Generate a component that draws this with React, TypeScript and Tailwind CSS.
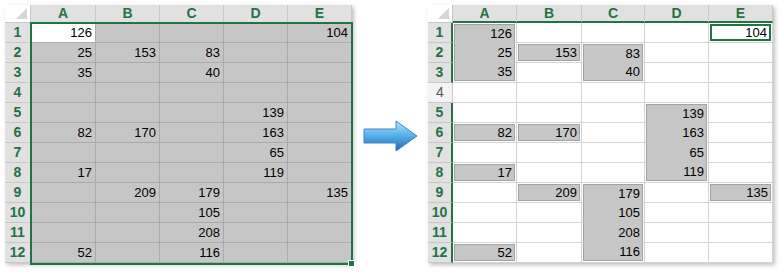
import clsx from "clsx";

const COLS = ["A", "B", "C", "D", "E"];

const DATA: (number | null)[][] = [
  [126, null, null, null, 104],
  [25, 153, 83, null, null],
  [35, null, 40, null, null],
  [null, null, null, null, null],
  [null, null, null, 139, null],
  [82, 170, null, 163, null],
  [null, null, null, 65, null],
  [17, null, null, 119, null],
  [null, 209, 179, null, 135],
  [null, null, 105, null, null],
  [null, null, 208, null, null],
  [52, null, 116, null, null],
];

const font = "font-['Liberation_Sans',Arial,sans-serif]";

function Corner() {
  return (
    <div className="flex items-end justify-end border-r border-b border-[#c8c8c8] bg-white p-[3px]">
      <svg width="11" height="11" viewBox="0 0 11 11">
        <path d="M11 0 L11 11 L0 11 Z" fill="#d6d6d6" />
      </svg>
    </div>
  );
}

function ColHeader({ label, green }: { label: string; green?: boolean }) {
  return (
    <div
      className={clsx(
        "flex items-center justify-center border-r border-[#c8c8c8] bg-[#e1e1e1] text-[14px] font-bold text-[#217346]",
        green ? "border-b-2 border-b-[#217346]" : "border-b border-b-[#c8c8c8]"
      )}
    >
      {label}
    </div>
  );
}

function RowHeader({ n, on, edge }: { n: number; on: boolean; edge?: boolean }) {
  return (
    <div
      className={clsx(
        "flex items-center justify-center border-b border-[#c8c8c8] text-[14px]",
        on ? "bg-[#e1e1e1] font-bold text-[#217346]" : "bg-[#f4f4f4] text-[#555]",
        edge && on ? "border-r-2 border-r-[#217346]" : "border-r border-r-[#c8c8c8]"
      )}
    >
      {n}
    </div>
  );
}

function LeftGrid() {
  return (
    <div className="relative shadow-[2px_2px_4px_rgba(0,0,0,0.25)]">
      <div className={clsx("grid grid-cols-[26px_65px_64px_64px_64px_64px] grid-rows-[18px_repeat(12,20px)]", font)}>
        <Corner />
        {COLS.map((c) => (
          <ColHeader key={c} label={c} />
        ))}
        {DATA.map((row, r) => (
          <div key={r} className="contents">
            <RowHeader n={r + 1} on />
            {row.map((v, c) => (
              <div
                key={c}
                className={clsx(
                  "flex items-center justify-end border-r border-b border-[#ababab] pr-[3px] text-[13px] text-black",
                  r === 0 && c === 0 ? "bg-white" : "bg-[#c6c6c6]"
                )}
              >
                {v}
              </div>
            ))}
          </div>
        ))}
      </div>
      <div className="pointer-events-none absolute left-[25px] top-[17px] -right-[1px] -bottom-[2px] border-2 border-[#217346]" />
      <div className="absolute -right-[3px] -bottom-[4px] h-[7px] w-[7px] border border-white bg-[#217346]" />
    </div>
  );
}

const isGray = (r: number, c: number) =>
  r >= 0 && r < 12 && c >= 0 && c < 5 && DATA[r][c] !== null && !(r === 0 && c === 4);

// each selected area runs down one column only, so side neighbours never merge
function RightCell({ r, c }: { r: number; c: number }) {
  const v = DATA[r][c];
  if (r === 0 && c === 4) {
    return (
      <div className="flex border-r border-b border-[#d4d4d4]">
        <div className="m-px flex flex-1 items-center justify-end border-2 border-[#217346] bg-white pr-[2px] text-[13px] text-black">
          {v}
        </div>
      </div>
    );
  }
  if (!isGray(r, c)) {
    return <div className="border-r border-b border-[#d4d4d4] bg-white" />;
  }
  const up = isGray(r - 1, c);
  const down = isGray(r + 1, c);
  return (
    <div
      className={clsx(
        "flex border-r border-r-[#d4d4d4] bg-white",
        down ? "border-b border-b-[#c6c6c6]" : "border-b border-b-[#d4d4d4]"
      )}
    >
      <div
        className={clsx(
          "mx-px flex flex-1 items-center justify-end border-x border-[#a3a3a3] bg-[#c6c6c6] pr-[2px] text-[13px] text-black",
          !up && "mt-px border-t",
          !down && "mb-px border-b"
        )}
      >
        {v}
      </div>
    </div>
  );
}

function RightGrid() {
  return (
    <div className="shadow-[2px_2px_4px_rgba(0,0,0,0.25)]">
      <div className={clsx("grid grid-cols-[25px_64px_65px_63px_64px_64px] grid-rows-[18px_repeat(12,20px)]", font)}>
        <Corner />
        {COLS.map((c) => (
          <ColHeader key={c} label={c} green />
        ))}
        {DATA.map((row, r) => (
          <div key={r} className="contents">
            <RowHeader n={r + 1} on={r !== 3} edge />
            {row.map((_, c) => (
              <RightCell key={c} r={r} c={c} />
            ))}
          </div>
        ))}
      </div>
    </div>
  );
}

function Arrow() {
  return (
    <svg width="56" height="32" viewBox="0 0 56 32">
      <defs>
        <linearGradient id="ag" x1="0" y1="0" x2="0" y2="1">
          <stop offset="0" stopColor="#b5e3fb" />
          <stop offset="0.45" stopColor="#5cb4ec" />
          <stop offset="1" stopColor="#1d66b5" />
        </linearGradient>
      </defs>
      <path
        d="M1 9 L33 9 L33 1 L54 16 L33 31 L33 23 L1 23 Z"
        fill="url(#ag)"
        stroke="#3f82c6"
        strokeWidth="1"
        strokeLinejoin="round"
      />
    </svg>
  );
}

export default function App() {
  return (
    <div className="flex h-[272px] w-[781px] items-start bg-white pl-[5px] pt-[5px]">
      <LeftGrid />
      <div className="flex h-[262px] w-[76px] items-center justify-center pl-[2px]">
        <Arrow />
      </div>
      <RightGrid />
    </div>
  );
}
